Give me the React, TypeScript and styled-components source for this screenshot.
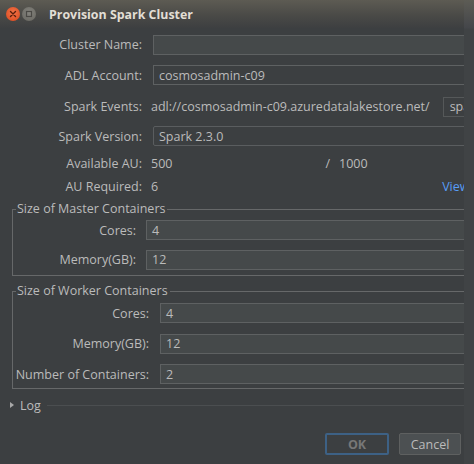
import React from "react";
import styled, { createGlobalStyle } from "styled-components";

const GlobalStyle = createGlobalStyle`
  html, body {
    margin: 0;
    padding: 0;
    background: #414446;
  }
  body {
    font-family: "Open Sans", "DejaVu Sans", sans-serif;
    font-size: 12.5px;
    color: #bbbbbb;
  }
`;

const Screen = styled.div`
  width: 474px;
  height: 464px;
  display: flex;
  overflow: hidden;
`;

const Dialog = styled.div`
  width: 464px;
  height: 464px;
  flex: none;
  background: #3c3f41;
  display: flex;
  flex-direction: column;
  overflow: hidden;
`;

const Strip = styled.div`
  flex: 1;
  background: linear-gradient(180deg, #5d5c55 0px, #44464a 28px, #404345 29px, #404345 100%);
`;

const TitleBar = styled.div`
  height: 28px;
  flex: none;
  display: flex;
  align-items: center;
  padding-left: 6px;
  background: linear-gradient(180deg, #5d5b53 0%, #4a4a47 55%, #3d3f41 100%);
`;

const WinButton = styled.span<{ $tone: "close" | "min" }>`
  width: 14px;
  height: 14px;
  border-radius: 50%;
  margin-right: 2px;
  display: flex;
  align-items: center;
  justify-content: center;
  background: ${(p) =>
    p.$tone === "close"
      ? "radial-gradient(circle at 50% 40%, #f27449, #d9461b)"
      : "radial-gradient(circle at 50% 40%, #85847e, #66655f)"};
`;

const Title = styled.span`
  margin-left: 11px;
  font-weight: 700;
  font-size: 12.4px;
  color: #e2ded5;
`;

const Form = styled.div`
  display: flex;
  flex-direction: column;
  padding-top: 2px;
`;

const Row = styled.div<{ $h: number; $label?: number }>`
  height: ${(p) => p.$h}px;
  display: grid;
  grid-template-columns: ${(p) => p.$label ?? 142}px 1fr;
  align-items: center;
  white-space: nowrap;
`;

const Label = styled.span`
  text-align: right;
`;

const Field = styled.div<{ $kind?: "edit" | "plain" | "combo"; $gap?: number }>`
  margin-left: ${(p) => p.$gap ?? 11}px;
  height: 20px;
  box-sizing: border-box;
  display: flex;
  align-items: center;
  padding-left: 5px;
  margin-right: -6px;
  border: 1px solid ${(p) => (p.$kind === "combo" ? "#5a5d5f" : "#5e6162")};
  border-radius: ${(p) => (p.$kind === "combo" ? "2px" : "0")};
  background: ${(p) => (p.$kind === "edit" ? "#45494a" : "#3c3f41")};
  color: #bbbbbb;
`;

const Value = styled.span<{ $gap?: number }>`
  margin-left: ${(p) => p.$gap ?? 9}px;
  display: flex;
  align-items: center;
`;

const SmallBox = styled.span`
  margin-left: 13px;
  height: 20px;
  padding: 0 6px;
  box-sizing: border-box;
  border: 1px solid #555859;
  display: flex;
  align-items: center;
`;

const Slash = styled.span`
  margin-left: 153px;
  margin-right: 9px;
`;

const Link = styled.span`
  margin-left: 284px;
  color: #589df6;
`;

const Group = styled.fieldset<{ $top: number; $h: number }>`
  margin: ${(p) => p.$top}px -20px 0 12px;
  padding: 0;
  height: ${(p) => p.$h}px;
  box-sizing: border-box;
  border: 1px solid #666869;
  display: flex;
  flex-direction: column;
`;

const Legend = styled.legend`
  padding: 0 2px 0 1px;
  margin-left: 3px;
  line-height: 14px;
  font-size: 12.5px;
  white-space: nowrap;
`;

const LogRow = styled.div`
  margin-top: 9px;
  height: 14px;
  display: flex;
  align-items: center;
  padding-left: 10px;
`;

const Caret = styled.span`
  width: 0;
  height: 0;
  border-top: 3px solid transparent;
  border-bottom: 3px solid transparent;
  border-left: 4px solid #a8a8a8;
  margin-right: 6px;
`;

const LogLine = styled.span`
  flex: 1;
  height: 1px;
  margin-left: 6px;
  background: #4b4e50;
`;

const Footer = styled.div`
  margin-top: auto;
  margin-bottom: 9px;
  display: flex;
  justify-content: flex-end;
  gap: 10px;
  padding-right: 3px;
`;

const Button = styled.button<{ $primary?: boolean }>`
  height: 22px;
  width: ${(p) => (p.$primary ? 64 : 62)}px;
  font-family: "Open Sans", "DejaVu Sans", sans-serif;
  font-size: 12.5px;
  border-radius: 2px;
  padding: 0;
  box-sizing: border-box;
  background: ${(p) => (p.$primary ? "#3c3f41" : "#4c5052")};
  border: ${(p) => (p.$primary ? "2px solid #3d6185" : "1px solid #5e6060")};
  color: ${(p) => (p.$primary ? "#777777" : "#bbbbbb")};
  font-weight: ${(p) => (p.$primary ? 700 : 400)};
`;

const App: React.FC = () => {
  return (
    <>
      <GlobalStyle />
      <Screen>
        <Dialog>
          <TitleBar>
            <WinButton $tone="close">
              <svg width="8" height="8" viewBox="0 0 8 8">
                <path d="M1.5 1.5 L6.5 6.5 M6.5 1.5 L1.5 6.5" stroke="#5a1e0c" strokeWidth="1.4" strokeLinecap="round" />
              </svg>
            </WinButton>
            <WinButton $tone="min">
              <svg width="8" height="8" viewBox="0 0 8 8">
                <rect x="1.5" y="1.5" width="5" height="5" fill="none" stroke="#4a4945" strokeWidth="1.2" />
              </svg>
            </WinButton>
            <Title>Provision Spark Cluster</Title>
          </TitleBar>

          <Form>
            <Row $h={29}>
              <Label>Cluster Name:</Label>
              <Field $kind="edit" />
            </Row>
            <Row $h={32}>
              <Label>ADL Account:</Label>
              <Field $kind="plain">cosmosadmin-c09</Field>
            </Row>
            <Row $h={31}>
              <Label>Spark Events:</Label>
              <Value>
                adl://cosmosadmin-c09.azuredatalakestore.net/
                <SmallBox>spark-events</SmallBox>
              </Value>
            </Row>
            <Row $h={28}>
              <Label>Spark Version:</Label>
              <Field $kind="combo">Spark 2.3.0</Field>
            </Row>
            <Row $h={26}>
              <Label>Available AU:</Label>
              <Value>
                500
                <Slash>/</Slash>
                1000
              </Value>
            </Row>
            <Row $h={20}>
              <Label>AU Required:</Label>
              <Value>
                6
                <Link>View</Link>
              </Value>
            </Row>
          </Form>

          <Group $top={6} $h={74}>
            <Legend>Size of Master Containers</Legend>
            <Row $h={28} $label={123}>
              <Label>Cores:</Label>
              <Field $kind="edit" $gap={10}>4</Field>
            </Row>
            <Row $h={31} $label={123}>
              <Label>Memory(GB):</Label>
              <Field $kind="edit" $gap={10}>12</Field>
            </Row>
          </Group>

          <Group $top={8} $h={105}>
            <Legend>Size of Worker Containers</Legend>
            <Row $h={30} $label={136}>
              <Label>Cores:</Label>
              <Field $kind="edit" $gap={11}>4</Field>
            </Row>
            <Row $h={31} $label={136}>
              <Label>Memory(GB):</Label>
              <Field $kind="edit" $gap={11}>12</Field>
            </Row>
            <Row $h={30} $label={136}>
              <Label>Number of Containers:</Label>
              <Field $kind="edit" $gap={11}>2</Field>
            </Row>
          </Group>

          <LogRow>
            <Caret />
            Log
            <LogLine />
          </LogRow>

          <Footer>
            <Button $primary>OK</Button>
            <Button>Cancel</Button>
          </Footer>
        </Dialog>
        <Strip />
      </Screen>
    </>
  );
};

export default App;
